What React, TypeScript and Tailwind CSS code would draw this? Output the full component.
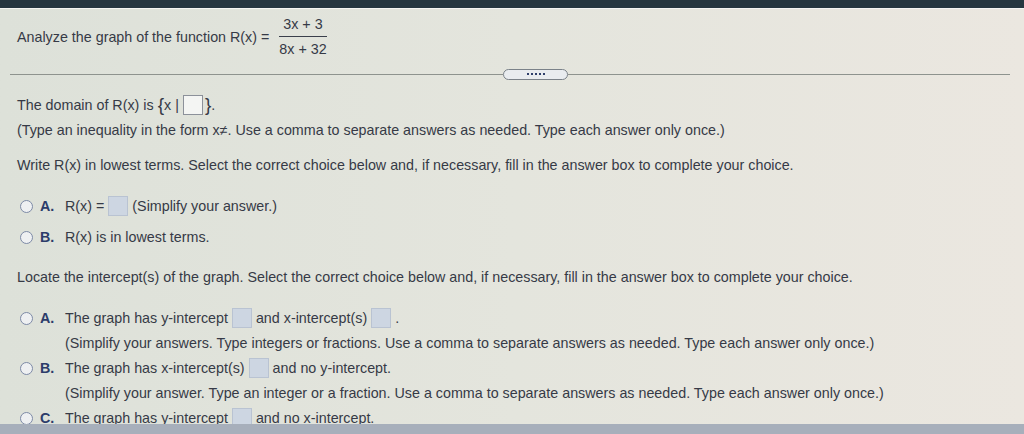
import React from "react";

const Radio = () => (
  <span className="inline-block w-[13px] h-[13px] rounded-full border border-[#7d8aa6] bg-[#eef0f2] mr-[7px] shrink-0" />
);

const Box = ({ fill = true }: { fill?: boolean }) => (
  <span
    className={
      "inline-block align-middle w-[20px] h-[20px] border mx-[4px] " +
      (fill ? "border-[#b9c3d2] bg-[#cdd6e2]" : "border-[#8c919a] bg-[#f4f5f3]")
    }
  />
);

const Letter = ({ l }: { l: string }) => (
  <span className="font-bold text-[#2c3c6a] w-[25px] shrink-0">{l}.</span>
);

export default function App() {
  return (
    <div
      className="relative w-[1024px] h-[434px] overflow-hidden flex flex-col bg-gradient-to-r from-[#dde1d9] via-[#e4e5dd] to-[#ebe7e0] text-[#363a46] text-[14.3px]"
      style={{ fontFamily: '"Liberation Sans", Arial, sans-serif' }}
    >
      <div className="h-[8px] bg-[#263640] shrink-0" />
      <div className="h-[1px] bg-[#f4f4f2] shrink-0" />
      <div className="flex items-center pl-[17px] pt-[5px]">
        <span className="leading-[20px]">Analyze the graph of the function R(x) =</span>
        <span className="flex flex-col items-center ml-[8px]">
          <span className="leading-[20px] px-[2px]">3x + 3</span>
          <span className="w-[48px] h-[1px] bg-[#3a3f4b] my-[2px]" />
          <span className="leading-[20px] px-[2px]">8x + 32</span>
        </span>
      </div>
      <div className="flex items-center mt-[9px] pl-[10px] pr-[14px] h-[12px]">
        <div className="w-[493px] h-[1px] bg-[#8e938e]" />
        <div className="w-[65px] h-[11px] rounded-full border border-[#7b8289] bg-[#e9ecef] flex items-center justify-center gap-[2px]">
          {[0, 1, 2, 3, 4].map((i) => (
            <span key={i} className="w-[2px] h-[2px] bg-[#2f3f6a]" />
          ))}
        </div>
        <div className="flex-1 h-[1px] bg-[#8e938e]" />
      </div>

      <div className="pl-[17px] flex flex-col">
        <div className="mt-[15px] leading-[20px] flex items-center">
          <span>The domain of R(x) is </span>
          <span className="text-[19px] leading-[20px] ml-[4px]">{"{"}</span>
          <span>x |</span>
          <Box fill={false} />
          <span className="text-[19px] leading-[20px] -ml-[2px]">{"}"}</span>
          <span>.</span>
        </div>
        <div className="mt-[5px] leading-[20px]">
          (Type an inequality in the form x≠. Use a comma to separate answers as needed. Type each answer only once.)
        </div>
        <div className="mt-[15px] leading-[20px]">
          Write R(x) in lowest terms. Select the correct choice below and, if necessary, fill in the answer box to complete your choice.
        </div>

        <div className="mt-[21px] leading-[20px] flex items-center pl-[3px]">
          <Radio />
          <Letter l="A" />
          <span>R(x) =</span>
          <Box />
          <span>(Simplify your answer.)</span>
        </div>
        <div className="mt-[11px] leading-[20px] flex items-center pl-[3px]">
          <Radio />
          <Letter l="B" />
          <span>R(x) is in lowest terms.</span>
        </div>

        <div className="mt-[20px] leading-[20px]">
          Locate the intercept(s) of the graph. Select the correct choice below and, if necessary, fill in the answer box to complete your choice.
        </div>

        <div className="mt-[21px] leading-[20px] flex items-center pl-[3px]">
          <Radio />
          <Letter l="A" />
          <span>The graph has y-intercept</span>
          <Box />
          <span>and x-intercept(s)</span>
          <Box />
          <span>.</span>
        </div>
        <div className="mt-[5px] leading-[20px] pl-[48px]">
          (Simplify your answers. Type integers or fractions. Use a comma to separate answers as needed. Type each answer only once.)
        </div>
        <div className="mt-[5px] leading-[20px] flex items-center pl-[3px]">
          <Radio />
          <Letter l="B" />
          <span>The graph has x-intercept(s)</span>
          <Box />
          <span>and no y-intercept.</span>
        </div>
        <div className="mt-[5px] leading-[20px] pl-[48px]">
          (Simplify your answer. Type an integer or a fraction. Use a comma to separate answers as needed. Type each answer only once.)
        </div>
        <div className="mt-[5px] leading-[20px] flex items-center pl-[3px] h-[20px]">
          <Radio />
          <Letter l="C" />
          <span>The graph has y-intercept</span>
          <Box />
          <span>and no x-intercept.</span>
        </div>
      </div>
      <div className="absolute left-0 right-0 bottom-0 h-[10px] bg-[#a7afbb]" />
    </div>
  );
}
